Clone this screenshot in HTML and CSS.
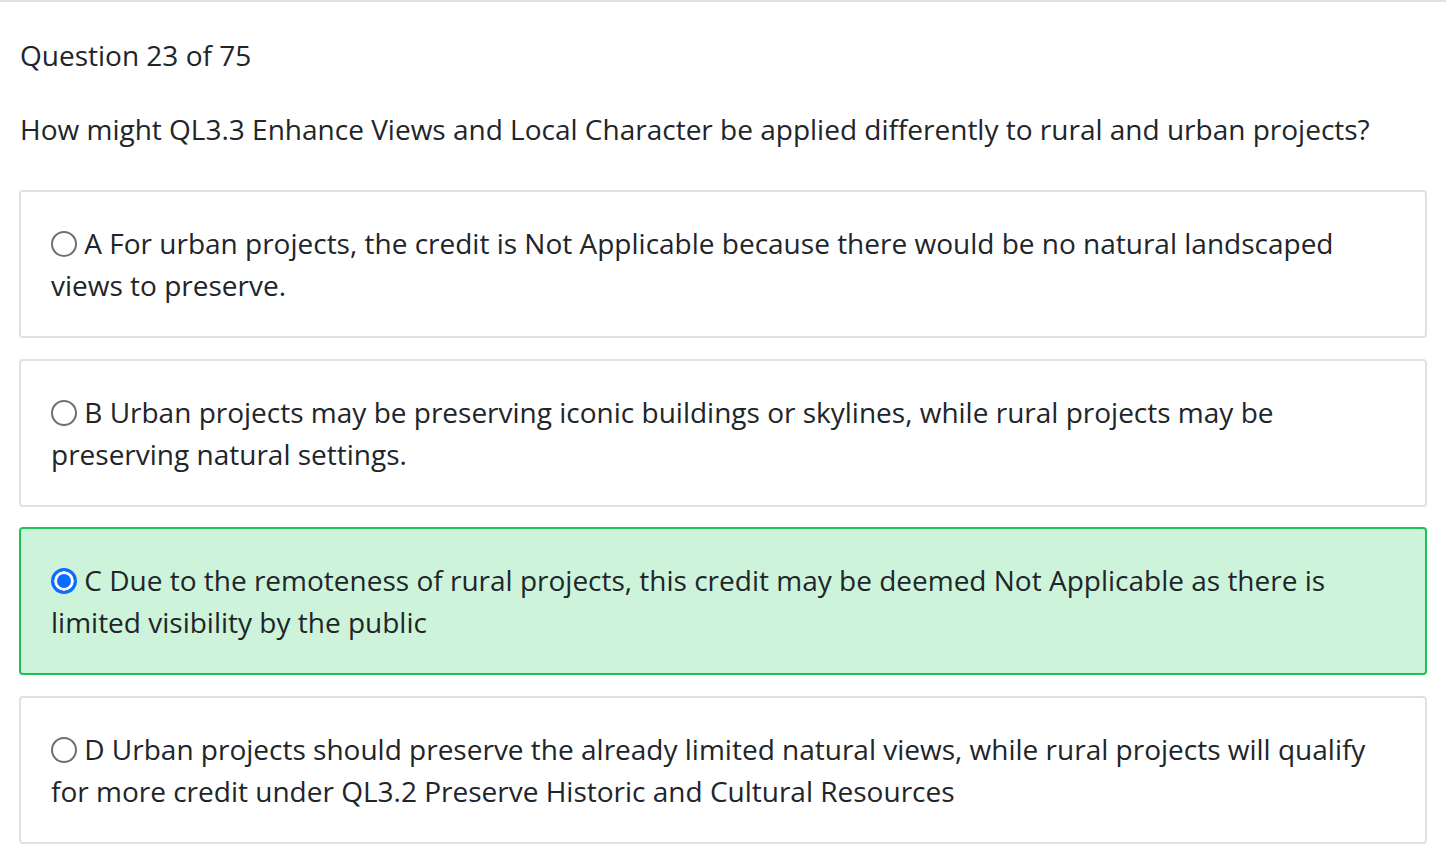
FILE: index.html
```html
<!DOCTYPE html>
<html>
<head>
<meta charset="utf-8">
<link rel="stylesheet" href="styles.css">
</head>
<body>
<div class="page">
  <div class="counter">Question 23 of 75</div>
  <div class="question">How might QL3.3 Enhance Views and Local Character be applied differently to rural and urban projects?</div>
  <div class="options">
    <label class="option">
      <input type="radio" name="q" class="radio"> A For urban projects, the credit is Not Applicable because there would be no natural landscaped views to preserve.
    </label>
    <label class="option">
      <input type="radio" name="q" class="radio"> B Urban projects may be preserving iconic buildings or skylines, while rural projects may be preserving natural settings.
    </label>
    <label class="option selected">
      <input type="radio" name="q" class="radio" checked> C Due to the remoteness of rural projects, this credit may be deemed Not Applicable as there is limited visibility by the public
    </label>
    <label class="option">
      <input type="radio" name="q" class="radio"> D Urban projects should preserve the already limited natural views, while rural projects will qualify for more credit under QL3.2 Preserve Historic and Cultural Resources
    </label>
  </div>
</div>
</body>
</html>
```
FILE: styles.css
```css
html, body {
  margin: 0;
  padding: 0;
  background: #fff;
}
body {
  font-family: "Open Sans", "Liberation Sans", sans-serif;
  color: #212529;
  border-top: 2px solid #dee2e6;
}
.page {
  padding: 0 19px 0 19px;
}
.counter {
  font-size: 28px;
  line-height: 42px;
  padding: 32px 0 0 1px;
}
.question {
  font-size: 28px;
  line-height: 42px;
  padding: 32px 0 0 1px;
}
.options {
  display: flex;
  flex-direction: column;
  gap: 20.5px;
  margin-top: 40px;
}
.option {
  display: block;
  border: 2px solid #dee2e6;
  border-radius: 4px;
  padding: 30px 30px;
  font-size: 28px;
  line-height: 42px;
  background: #fff;
  cursor: pointer;
}
.option.selected {
  background: #cdf4da;
  border-color: #1dc453;
}
.radio {
  -webkit-appearance: none;
  appearance: none;
  box-sizing: border-box;
  width: 26px;
  height: 26px;
  margin: 0;
  border: 2px solid #707070;
  border-radius: 50%;
  background: #fff;
  vertical-align: -3px;
}
.radio:checked {
  border: 3px solid #0b6cff;
  background: #0b6cff;
  box-shadow: inset 0 0 0 3px #fff;
}
```
